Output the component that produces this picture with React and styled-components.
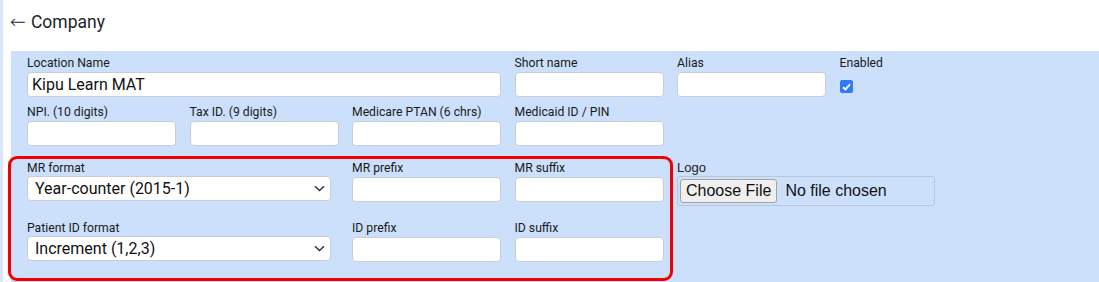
import React from 'react'
import styled, { createGlobalStyle } from 'styled-components'

const GlobalStyle = createGlobalStyle`
  html, body {
    margin: 0;
    background: #fff;
  }
  body {
    font-family: Roboto, "Noto Sans", sans-serif;
    color: #212529;
  }
  * { box-sizing: border-box; }
`

const Page = styled.div`
  border-left: 3px solid #d9e6fb;
  padding-left: 8px;
  min-height: 282px;
  display: flex;
  flex-direction: column;
`

const Title = styled.div`
  height: 32px;
  font-size: 17.5px;
  line-height: 20px;
  padding-top: 12px;
  margin: 0 0 19px -1px;
  color: #212529;
`

const Arrow = styled.span`
  font-family: "DejaVu Sans", sans-serif;
  font-weight: 300;
  font-size: 19px;
  line-height: 16px;
  margin-right: 5px;
`

const Panel = styled.div`
  flex: 1;
  background: #cce0fc;
  padding: 5px 0 18px 16px;
`

const Row = styled.div`
  display: grid;
  grid-template-columns: repeat(6, 149px);
  column-gap: 13.5px;
  margin-top: ${p => p.$top || 0}px;
`

const Field = styled.div`
  display: flex;
  flex-direction: column;
  grid-column: span ${p => p.$span || 1};
`

const Label = styled.label`
  font-size: 12.2px;
  line-height: 14px;
  margin-bottom: 2px;
  color: #1a1a1a;
  white-space: nowrap;
`

const TextInput = styled.input`
  width: 100%;
  height: 25px;
  border: 1px solid #c9ced6;
  border-radius: 4px;
  background: #fff;
  padding: 0 4px;
  font-family: Roboto, sans-serif;
  font-size: 16px;
  color: #111;
  outline: none;
`

const Check = styled.span`
  display: inline-flex;
  align-items: center;
  justify-content: center;
  width: 13px;
  height: 13px;
  margin-top: 8px;
  border-radius: 2px;
  background: #2f7bf3;
`

const Lower = styled.div`
  display: flex;
  align-items: flex-start;
  margin-top: 15px;
`

const Highlight = styled.div`
  position: relative;
  display: grid;
  grid-template-columns: repeat(4, 149px);
  column-gap: 13.5px;
  row-gap: 19px;

  &::before {
    content: '';
    position: absolute;
    top: -5px;
    left: -19px;
    right: -9px;
    bottom: -19px;
    border: 3px solid #f20000;
    border-radius: 9px;
    pointer-events: none;
  }
`

const SelectWrap = styled.div`
  position: relative;
  width: 304px;
`

const Select = styled.select`
  appearance: none;
  width: 100%;
  height: 25px;
  margin-top: -1px;
  border: 1px solid #c9ced6;
  border-radius: 4px;
  background: #fff;
  padding: 0 24px 0 7px;
  font-family: Roboto, sans-serif;
  font-size: 16px;
  color: #111;
  outline: none;
`

const Chevron = styled.svg`
  position: absolute;
  right: 6px;
  top: 8px;
  pointer-events: none;
`

const LogoField = styled.div`
  display: flex;
  flex-direction: column;
  margin-left: 13.5px;
  width: 258px;
`

const LogoLabel = styled.label`
  font-family: "Liberation Sans", Arial, sans-serif;
  font-size: 13px;
  line-height: 14px;
  margin-bottom: 1px;
  color: #222;
`

const FileBox = styled.div`
  display: flex;
  align-items: center;
  height: 30px;
  border: 1px solid #bac6d8;
  border-radius: 3px;
  padding: 0 2px;
  font-family: "Liberation Sans", Arial, sans-serif;
  font-size: 16px;
  color: #111;
`

const FileButton = styled.button`
  height: 24px;
  padding: 0 5px;
  margin-right: 8px;
  border: 1px solid #a3a3a3;
  border-radius: 3px;
  background: #efefef;
  font-family: "Liberation Sans", Arial, sans-serif;
  font-size: 16px;
  color: #111;
`

const DownIcon = () => (
  <Chevron width="11" height="7" viewBox="0 0 11 7">
    <path d="M1 1.2 L5.5 5.5 L10 1.2" fill="none" stroke="#333" strokeWidth="1.5" />
  </Chevron>
)

const Input = ({ label, span, value }) => (
  <Field $span={span}>
    <Label>{label}</Label>
    <TextInput defaultValue={value} />
  </Field>
)

const SelectField = ({ label, value }) => (
  <Field $span={2}>
    <Label>{label}</Label>
    <SelectWrap>
      <Select defaultValue={value}>
        <option>{value}</option>
      </Select>
      <DownIcon />
    </SelectWrap>
  </Field>
)

const App = () => {
  return (
    <>
      <GlobalStyle />
      <Page>
        <Title><Arrow>←</Arrow>Company</Title>
        <Panel>
          <Row>
            <Input label="Location Name" span={3} value="Kipu Learn MAT" />
            <Input label="Short name" />
            <Input label="Alias" />
            <Field>
              <Label>Enabled</Label>
              <Check>
                <svg width="9" height="8" viewBox="0 0 9 8">
                  <path d="M1 4.2 L3.4 6.5 L8 1.3" fill="none" stroke="#fff" strokeWidth="1.9" />
                </svg>
              </Check>
            </Field>
          </Row>
          <Row $top={8}>
            <Input label="NPI. (10 digits)" />
            <Input label="Tax ID. (9 digits)" />
            <Input label="Medicare PTAN (6 chrs)" />
            <Input label="Medicaid ID / PIN" />
          </Row>
          <Lower>
            <Highlight>
              <SelectField label="MR format" value="Year-counter (2015-1)" />
              <Input label="MR prefix" />
              <Input label="MR suffix" />
              <SelectField label="Patient ID format" value="Increment (1,2,3)" />
              <Input label="ID prefix" />
              <Input label="ID suffix" />
            </Highlight>
            <LogoField>
              <LogoLabel>Logo</LogoLabel>
              <FileBox>
                <FileButton>Choose File</FileButton>
                <span>No file chosen</span>
              </FileBox>
            </LogoField>
          </Lower>
        </Panel>
      </Page>
    </>
  )
}

export default App
